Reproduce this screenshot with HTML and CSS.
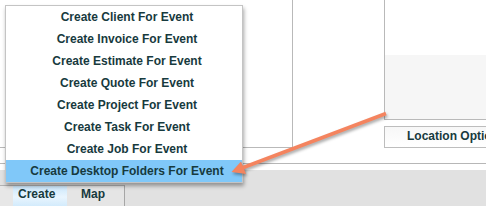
FILE: index.html
```html
<!DOCTYPE html>
<html>
<head>
<meta charset="utf-8">
<link rel="stylesheet" href="styles.css">
</head>
<body>
<div class="app">
  <div class="panels">
    <div class="left"></div>
    <div class="mid"></div>
    <div class="right">
      <div class="box"><div class="box-top"></div><div class="box-fill"></div></div>
      <div class="btn">Location Options</div>
    </div>
  </div>
  <div class="spacer"></div>
  <div class="bottom">
    <div class="white-band"></div>
    <div class="gray-band"></div>
    <div class="tabs">
      <div class="tab-lead"></div>
      <div class="tab tab-create">Create</div>
      <div class="tab tab-map">Map</div>
    </div>
  </div>

  <div class="menu">
    <div class="item">Create Client For Event</div>
    <div class="item">Create Invoice For Event</div>
    <div class="item">Create Estimate For Event</div>
    <div class="item">Create Quote For Event</div>
    <div class="item">Create Project For Event</div>
    <div class="item">Create Task For Event</div>
    <div class="item">Create Job For Event</div>
    <div class="item item-active">Create Desktop Folders For Event</div>
  </div>

  <svg class="arrow" width="486" height="206" viewBox="0 0 486 206">
    <line x1="386" y1="113.5" x2="242" y2="168" stroke="#f4845f" stroke-width="3.5"/>
    <polygon points="231.5,172 241,161.5 246,174" fill="#f4845f"/>
  </svg>
</div>
</body>
</html>
```

FILE: styles.css
```css
html, body {
  margin: 0;
  padding: 0;
  background: #ffffff;
}
body {
  width: 486px;
  height: 206px;
  overflow: hidden;
  font-family: "Liberation Sans", Arial, sans-serif;
  color: #173a3e;
}
.app {
  position: relative;
  width: 486px;
  height: 206px;
}
.panels {
  display: flex;
  height: 148px;
  overflow: hidden;
}
.left {
  width: 292px;
  height: 147px;
  border-right: 1px solid #b9b9b9;
  border-bottom: 1px solid #b9b9b9;
  flex: none;
}
.mid {
  width: 91px;
  flex: none;
}
.right {
  flex: 1;
  display: flex;
  flex-direction: column;
  gap: 6px;
}
.box {
  height: 126px;
  border-left: 1px solid #b9b9b9;
  border-bottom: 1px solid #b9b9b9;
  display: flex;
  flex-direction: column;
}
.box-top {
  height: 55px;
  background: #ffffff;
}
.box-fill {
  flex: 1;
  background: #f6f6f6;
}
.btn {
  border: 1px solid #bdbdbd;
  border-right: none;
  height: 20px;
  padding: 1px 0 0 22px;
  font-weight: bold;
  font-size: 12px;
  line-height: 16px;
  white-space: nowrap;
  background: linear-gradient(#f7f7f7, #ffffff);
}
.spacer {
  height: 15px;
}
.bottom {
  border-top: 1px solid #b7b7b7;
}
.white-band {
  height: 6px;
  background: #ffffff;
}
.gray-band {
  height: 15px;
  background: #e1e1e1;
}
.tabs {
  display: flex;
  height: 21px;
  background: #e1e1e1;
}
.tab-lead {
  width: 13px;
  background: #e7e7e7;
  border-top: 1px solid #b3b3b3;
}
.tab {
  font-weight: bold;
  font-size: 12px;
  line-height: 17px;
  height: 20px;
  border-top: 1px solid #b3b3b3;
  white-space: nowrap;
}
.tab-create {
  width: 49px;
  padding-left: 5px;
  background: linear-gradient(#cbe7fb, #e9f5fe 55%, #d3ebfc);
}
.tab-map {
  width: 43px;
  padding-left: 14px;
  background: #e5e5e5;
  border-right: 1px solid #a6a6a6;
}
.menu {
  position: absolute;
  left: 5px;
  top: 5px;
  width: 236px;
  background: #ffffff;
  border: 1px solid #c4c4c4;
  box-shadow: 1px 3px 4px rgba(0, 0, 0, 0.35);
}
.item {
  height: 22px;
  line-height: 22px;
  padding-left: 6px;
  text-align: center;
  font-weight: bold;
  font-size: 12px;
  white-space: nowrap;
}
.item-active {
  background: #80c8f9;
}
.arrow {
  position: absolute;
  left: 0;
  top: 0;
  pointer-events: none;
  filter: drop-shadow(1px 2px 1.5px rgba(0, 0, 0, 0.35));
}
```
